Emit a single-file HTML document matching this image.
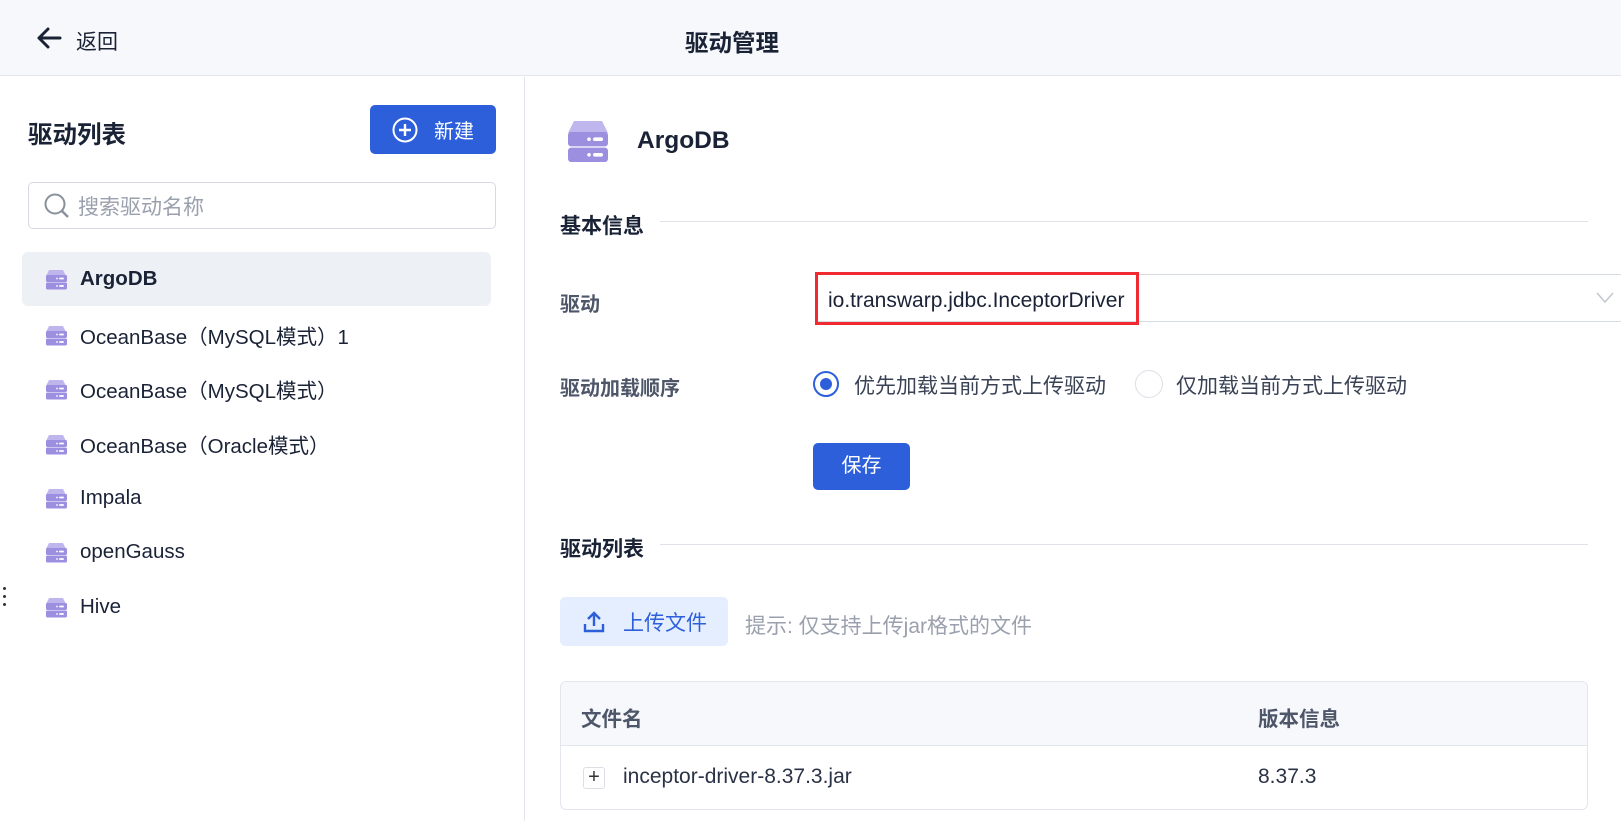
<!DOCTYPE html>
<html><head><meta charset="utf-8"><style>
*{box-sizing:border-box;margin:0;padding:0}
body{width:1621px;height:821px;overflow:hidden;background:#fff;font-family:"Liberation Sans","Noto Sans CJK SC",sans-serif;color:#1a2236;position:relative}
.abs{position:absolute}
.hdr{left:0;top:0;width:1621px;height:76px;background:#f7f8fb;border-bottom:1px solid #e3e6ec}
.item{left:22px;width:469px;height:54px;display:flex;align-items:center;padding-left:23px;font-size:20.5px;color:#1a2236}
.item svg{margin-right:13px}
.sec{font-size:21px;font-weight:bold;color:#1a2236}
.line{height:1px;background:#dfe2e8}
.lbl{font-size:20px;color:#4e5669;font-weight:bold}
</style></head><body>
<div class="abs hdr"></div>
<svg class="abs" style="left:36px;top:27px" width="26" height="22" viewBox="0 0 26 22"><path d="M12 2 L3 11 L12 20 M3 11 H24" fill="none" stroke="#1a2236" stroke-width="3" stroke-linecap="round" stroke-linejoin="round"/></svg>
<div class="abs" style="left:76px;top:26px;font-size:21px">返回</div>
<div class="abs" style="left:685px;top:24px;font-size:23.5px;font-weight:bold">驱动管理</div>

<div class="abs" style="left:524px;top:77px;width:1px;height:744px;background:#e3e6ec"></div>

<div class="abs sec" style="left:28px;top:116px;font-size:24.5px">驱动列表</div>
<div class="abs" style="left:370px;top:105px;width:126px;height:49px;background:#2d5fdb;border-radius:5px;color:#fff;font-size:20px;display:flex;align-items:center;padding-left:22px">
<svg width="26" height="26" viewBox="0 0 26 26" style="margin-right:16px"><circle cx="13" cy="13" r="11.5" fill="none" stroke="#fff" stroke-width="2"/><path d="M13 7V19M7 13H19" stroke="#fff" stroke-width="2.4"/></svg>新建</div>
<div class="abs" style="left:28px;top:182px;width:468px;height:47px;border:1px solid #d7dae2;border-radius:5px;display:flex;align-items:center;padding-left:15px;font-size:21px;color:#9aa0ad">
<svg width="26" height="26" viewBox="0 0 26 26" style="margin-right:8px"><circle cx="11" cy="11" r="9.5" fill="none" stroke="#8a909c" stroke-width="2"/><path d="M18 18L24 24" stroke="#8a909c" stroke-width="2.4"/></svg>搜索驱动名称</div>

<svg width="0" height="0" style="position:absolute"><defs><symbol id="db" viewBox="0 0 22 22"><path d="M4 2h14l3 6H1z" fill="#c0b6ee"/><rect x="1" y="7" width="21" height="7" rx="1.5" fill="#9d8fe0"/><rect x="1" y="14.5" width="21" height="7" rx="1.5" fill="#9d8fe0"/><circle cx="12" cy="10.5" r="0.9" fill="#fff"/><rect x="14" y="9.6" width="5" height="1.8" rx="0.9" fill="#fff"/><circle cx="12" cy="18" r="0.9" fill="#fff"/><rect x="14" y="17.1" width="5" height="1.8" rx="0.9" fill="#fff"/></symbol></defs></svg>

<div class="abs item" style="top:252px;background:#edf0f5;border-radius:6px;font-weight:bold"><svg width="22" height="22"><use href="#db"/></svg>ArgoDB</div>
<div class="abs item" style="top:308px"><svg width="22" height="22"><use href="#db"/></svg>OceanBase（MySQL模式）1</div>
<div class="abs item" style="top:362px"><svg width="22" height="22"><use href="#db"/></svg>OceanBase（MySQL模式）</div>
<div class="abs item" style="top:417px"><svg width="22" height="22"><use href="#db"/></svg>OceanBase（Oracle模式）</div>
<div class="abs item" style="top:471px"><svg width="22" height="22"><use href="#db"/></svg>Impala</div>
<div class="abs item" style="top:525px"><svg width="22" height="22"><use href="#db"/></svg>openGauss</div>
<div class="abs item" style="top:580px"><svg width="22" height="22"><use href="#db"/></svg>Hive</div>
<div class="abs" style="left:3px;top:587px;width:3px;height:3px;background:#333;border-radius:50%;box-shadow:0 8px 0 #333,0 16px 0 #333"></div>

<svg class="abs" style="left:566px;top:119px" width="44" height="44" viewBox="0 0 22 22"><path d="M4 1h14l3 6H1z" fill="#c0b6ee"/><rect x="1" y="6.5" width="20" height="7.2" rx="1.6" fill="#9d8fe0"/><rect x="1" y="14.3" width="20" height="7.2" rx="1.6" fill="#9d8fe0"/><circle cx="11.5" cy="10.1" r="0.9" fill="#fff"/><rect x="13.5" y="9.2" width="5" height="1.8" rx="0.9" fill="#fff"/><circle cx="11.5" cy="17.9" r="0.9" fill="#fff"/><rect x="13.5" y="17" width="5" height="1.8" rx="0.9" fill="#fff"/></svg>
<div class="abs" style="left:637px;top:127px;font-size:24.5px;font-weight:bold">ArgoDB</div>

<div class="abs sec" style="left:560px;top:210px">基本信息</div>
<div class="abs line" style="left:660px;top:221px;width:928px"></div>

<div class="abs lbl" style="left:560px;top:288px">驱动</div>
<div class="abs" style="left:815px;top:274px;width:806px;height:48px;border-top:1px solid #d7dce4;border-bottom:1px solid #d7dce4"></div>
<div class="abs" style="left:815px;top:272px;width:324px;height:53px;border:3px solid #f02a30"></div>
<div class="abs" style="left:828px;top:289px;font-size:21px;color:#1a2236">io.transwarp.jdbc.InceptorDriver</div>
<svg class="abs" style="left:1596px;top:292px" width="18" height="12" viewBox="0 0 18 12"><path d="M1 1L9 10L17 1" fill="none" stroke="#c2c7d0" stroke-width="1.5"/></svg>

<div class="abs lbl" style="left:560px;top:372px">驱动加载顺序</div>
<div class="abs" style="left:813px;top:371px;width:26px;height:26px;border:2px solid #2d5fdb;border-radius:50%"></div>
<div class="abs" style="left:820px;top:378px;width:12px;height:12px;background:#2d5fdb;border-radius:50%"></div>
<div class="abs" style="left:854px;top:370px;font-size:21px;color:#3a4256">优先加载当前方式上传驱动</div>
<div class="abs" style="left:1135px;top:370px;width:28px;height:28px;border:1.5px solid #dcdfe6;border-radius:50%"></div>
<div class="abs" style="left:1176px;top:370px;font-size:21px;color:#3a4256">仅加载当前方式上传驱动</div>

<div class="abs" style="left:813px;top:443px;width:97px;height:47px;background:#2d5fdb;border-radius:5px;color:#fff;font-size:20px;text-align:center;line-height:47px">保存</div>

<div class="abs sec" style="left:560px;top:533px">驱动列表</div>
<div class="abs line" style="left:660px;top:544px;width:928px"></div>

<div class="abs" style="left:560px;top:597px;width:168px;height:49px;background:#e5eeff;border-radius:5px;color:#2d5fdb;font-size:21px;display:flex;align-items:center;padding-left:23px">
<svg width="22" height="22" viewBox="0 0 22 22" style="margin-right:18px"><path d="M11 15V2M5 8L11 2L17 8M2 13V20H20V13" fill="none" stroke="#2d5fdb" stroke-width="2.4"/></svg>上传文件</div>
<div class="abs" style="left:745px;top:610px;font-size:21px;color:#9aa0ad">提示: 仅支持上传jar格式的文件</div>

<div class="abs" style="left:560px;top:681px;width:1028px;height:129px;border:1px solid #e3e6ec;border-radius:6px;overflow:hidden">
<div style="height:64px;background:#f7f8fb;border-bottom:1px solid #e3e6ec;position:relative">
<div class="abs lbl" style="left:20px;top:20px;font-size:20.5px">文件名</div>
<div class="abs lbl" style="left:697px;top:20px;font-size:20.5px">版本信息</div></div>
<div style="position:relative;height:64px">
<div class="abs" style="left:22px;top:21px;width:22px;height:22px;border:1px solid #dcdfe6;border-radius:3px;text-align:center;line-height:19px;font-size:20px;color:#333">+</div>
<div class="abs" style="left:62px;top:19px;font-size:21px;color:#2a3246">inceptor-driver-8.37.3.jar</div>
<div class="abs" style="left:697px;top:19px;font-size:21px;color:#2a3246">8.37.3</div></div>
</div>
</body></html>
